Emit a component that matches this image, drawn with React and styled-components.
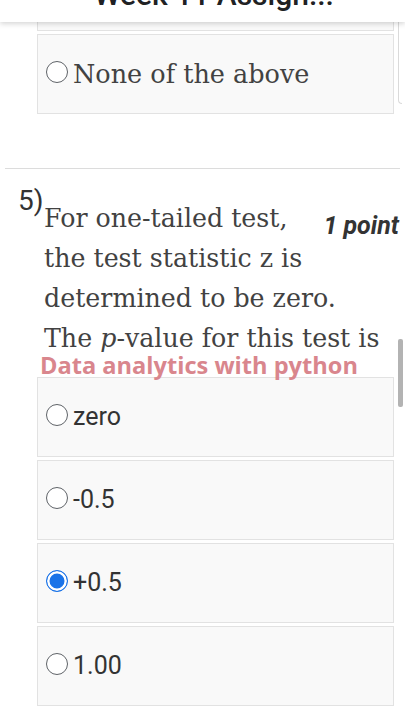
import React from "react";
import styled, { createGlobalStyle } from "styled-components";

const Global = createGlobalStyle`
  html, body { margin: 0; padding: 0; background: #ffffff; }
  * { box-sizing: border-box; }
`;

const Page = styled.div`
  position: relative;
  width: 405px;
  height: 720px;
  overflow: hidden;
  background: #ffffff;
  font-family: Roboto, "Liberation Sans", sans-serif;
`;

const Header = styled.header`
  position: relative;
  z-index: 3;
  height: 22px;
  background: #ffffff;
  box-shadow: 0 2px 5px rgba(0, 0, 0, 0.16);
  overflow: hidden;
  display: flex;
  align-items: flex-start;
  padding-left: 94px;
`;

const Title = styled.h1`
  margin: -20px 0 0 0;
  font-family: Roboto, "Liberation Sans", sans-serif;
  font-weight: 500;
  font-size: 30px;
  line-height: 30px;
  color: #202124;
  white-space: nowrap;
`;

const PrevOptions = styled.div`
  display: flex;
  flex-direction: column;
  gap: 3px;
  padding: 0 11px 0 37px;
  margin-top: -13px;
`;

const OptionBox = styled.label`
  display: flex;
  align-items: flex-start;
  gap: 5px;
  height: ${(p) => p.$h || 80}px;
  padding: ${(p) => (p.$pt === undefined ? 26 : p.$pt)}px 8px 0 8px;
  background: #f9f9f9;
  border: 1px solid #e2e2e2;
`;

const Radio = styled.span`
  flex: none;
  width: 22px;
  height: 22px;
  border-radius: 50%;
  border: 1.5px solid ${(p) => (p.$checked ? "#1a73e8" : "#5f6368")};
  background: ${(p) => (p.$checked ? "#1a73e8" : "#ffffff")};
  box-shadow: ${(p) => (p.$checked ? "inset 0 0 0 2.5px #ffffff" : "none")};
`;

const SerifLabel = styled.span`
  font-family: "DejaVu Serif", "Liberation Serif", serif;
  font-size: 25.5px;
  line-height: 24px;
  color: #424242;
  margin-top: 1px;
`;

const SansLabel = styled.span`
  font-family: Roboto, "Liberation Sans", sans-serif;
  font-size: 25px;
  line-height: 24px;
  color: #333333;
  margin-top: 1px;
`;

const Divider = styled.hr`
  margin: 54px 5px 0 5px;
  border: none;
  border-top: 1.5px solid #dcdcdc;
  height: 0;
`;

const Question = styled.section`
  display: flex;
  align-items: flex-start;
  padding: 18px 6px 0 18px;
`;

const Number = styled.span`
  flex: none;
  width: 26px;
  font-family: Roboto, "Liberation Sans", sans-serif;
  font-size: 28px;
  line-height: 28px;
  color: #333333;
`;

const QuestionText = styled.div`
  flex: 1;
  margin-top: 12px;
  font-family: "DejaVu Serif", "Liberation Serif", serif;
  font-size: 25.3px;
  line-height: 40px;
  color: #424242;
  white-space: nowrap;
`;

const Points = styled.span`
  float: right;
  margin-top: 12px;
  font-family: Roboto, "Liberation Sans", sans-serif;
  font-weight: 700;
  font-style: italic;
  font-size: 25px;
  line-height: 30px;
  color: #333333;
`;

const Options = styled.div`
  display: flex;
  flex-direction: column;
  gap: 3px;
  padding: 0 11px 0 37px;
  margin-top: 18px;
`;

const Watermark = styled.div`
  position: absolute;
  left: 40px;
  top: 351px;
  z-index: 2;
  font-family: "Open Sans", "Noto Sans", sans-serif;
  font-weight: 700;
  font-size: 23.6px;
  line-height: 28px;
  color: #d9868d;
  white-space: nowrap;
`;

const EdgeLine = styled.div`
  position: absolute;
  left: 398px;
  top: 22px;
  width: 4px;
  height: 82px;
  border-left: 1.5px solid #dadada;
  border-bottom: 1.5px solid #dadada;
  border-bottom-left-radius: 4px;
`;

const ScrollThumb = styled.div`
  position: absolute;
  left: 398px;
  top: 339px;
  width: 5px;
  height: 68px;
  border-radius: 2px;
  background: #b3b3b3;
`;

const options = [
  { label: "zero", checked: false },
  { label: "-0.5", checked: false },
  { label: "+0.5", checked: true },
  { label: "1.00", checked: false },
];

export default function App() {
  return (
    <Page>
      <Global />
      <Header>
        <Title>Week 11 Assign...</Title>
      </Header>
      <PrevOptions>
        <OptionBox $h={22} $pt={0} />
        <OptionBox>
          <Radio />
          <SerifLabel>None of the above</SerifLabel>
        </OptionBox>
      </PrevOptions>
      <Divider />
      <Question>
        <Number>5)</Number>
        <QuestionText>
          <Points>1 point</Points>
          For one-tailed test,
          <br />
          the test statistic z is
          <br />
          determined to be zero.
          <br />
          The <i>p</i>-value for this test is
        </QuestionText>
      </Question>
      <Options>
        {options.map((o) => (
          <OptionBox key={o.label}>
            <Radio $checked={o.checked} />
            <SansLabel>{o.label}</SansLabel>
          </OptionBox>
        ))}
      </Options>
      <Watermark>Data analytics with python</Watermark>
      <EdgeLine />
      <ScrollThumb />
    </Page>
  );
}
